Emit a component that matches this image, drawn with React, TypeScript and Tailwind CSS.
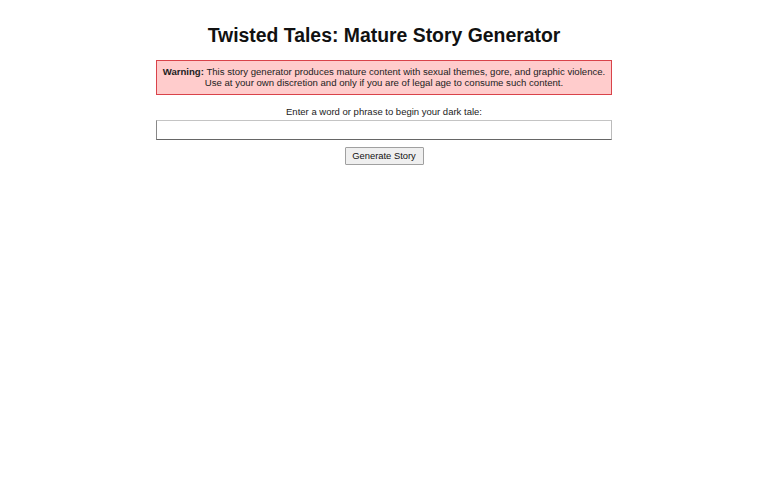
export default function App() {
  return (
    <div className="min-h-[480px] bg-white font-['Liberation_Sans',Arial,sans-serif] text-black">
      <div className="mx-auto w-[456px] pt-[23px]">
        <h1 className="whitespace-nowrap text-center text-[19.4px] font-bold leading-[24px] text-[#111]">
          Twisted Tales: Mature Story Generator
        </h1>

        <div className="mt-[13px] border border-[#d9434a] bg-[#ffcccc] pb-[6px] pt-[5px] text-center text-[9.6px] leading-[11px] text-[#222]">
          <p className="whitespace-nowrap">
            <strong>Warning:</strong> This story generator produces mature content with sexual themes, gore, and graphic violence.
          </p>
          <p className="whitespace-nowrap">Use at your own discretion and only if you are of legal age to consume such content.</p>
        </div>

        <label htmlFor="seed" className="mt-[11px] block text-center text-[9.5px] leading-[12px] text-[#222]">
          Enter a word or phrase to begin your dark tale:
        </label>
        <input
          id="seed"
          type="text"
          className="mt-[2px] block h-[20px] w-full border border-b-[#666] border-l-[#888] border-r-[#bbb] border-t-[#c4c4c4] bg-white px-1 text-[10px] outline-none"
        />

        <div className="mt-[7px] flex justify-center">
          <button className="h-[18px] w-[79px] rounded-[1px] border border-[#a0a0a0] bg-[#efefef] text-[9.4px] leading-[16px] text-[#111]">
            Generate Story
          </button>
        </div>
      </div>
    </div>
  );
}
